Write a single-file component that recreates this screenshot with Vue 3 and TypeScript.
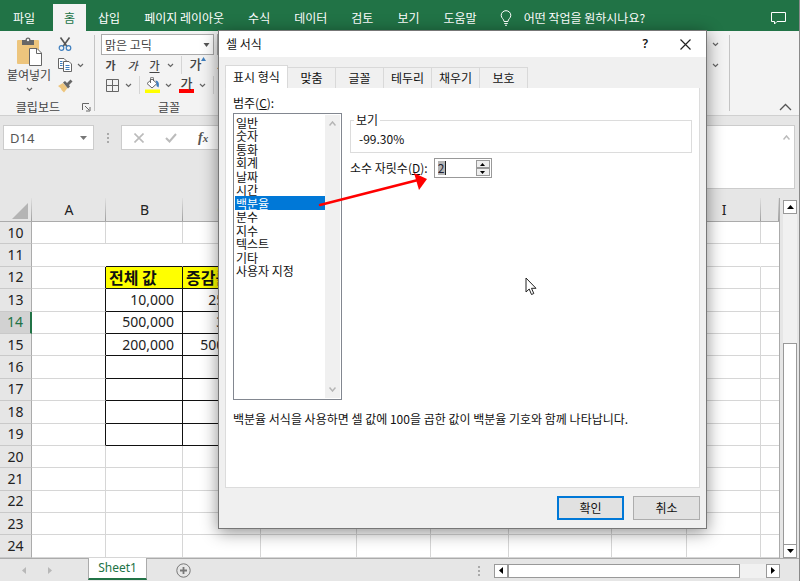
<script setup lang="ts">
import { ref } from 'vue'

interface Row {
  n: number
  b?: string
  c?: string
}

const menus: string[] = ['파일', '홈', '삽입', '페이지 레이아웃', '수식', '데이터', '검토', '보기', '도움말']
const activeMenu = ref('홈')

const columns: string[] = ['A', 'B', 'C', 'D', 'E', 'F', 'G', 'H', 'I', '']
const rows: Row[] = [
  { n: 10 },
  { n: 11 },
  { n: 12, b: '전체 값', c: '증감률' },
  { n: 13, b: '10,000', c: '25,000' },
  { n: 14, b: '500,000', c: '3,500' },
  { n: 15, b: '200,000', c: '500,000' },
  ...[16, 17, 18, 19, 20, 21, 22, 23, 24].map((n) => ({ n })),
]

function cellText(row: Row, col: string): string {
  if (col === 'B') return row.b ?? ''
  if (col === 'C') return row.c ?? ''
  return ''
}

function cellClass(row: Row, col: string): Record<string, boolean> {
  const inTable = row.n >= 12 && row.n <= 19
  const tableCol = col === 'B' || col === 'C'
  return {
    merged: row.n === 11,
    'line-right': inTable && (tableCol || col === 'A'),
    'line-bottom': tableCol && (inTable || row.n === 11),
    title: row.n === 12 && tableCol,
  }
}

const dialogTabs: string[] = ['표시 형식', '맞춤', '글꼴', '테두리', '채우기', '보호']
const activeTab = ref('표시 형식')

const categories: string[] = [
  '일반', '숫자', '통화', '회계', '날짜', '시간',
  '백분율', '분수', '지수', '텍스트', '기타', '사용자 지정',
]
const category = ref('백분율')
const decimals = ref('2')
</script>

<template>
  <div class="window">
    <nav class="menu">
      <button
        v-for="m in menus"
        :key="m"
        type="button"
        class="menu-item"
        :class="{ active: m === activeMenu, file: m === '파일' }"
        @click="activeMenu = m"
      >{{ m }}</button>
      <button type="button" class="tell-me">
        <svg width="12" height="16" viewBox="0 0 12 16" fill="none" stroke="#fff">
          <path d="M4 11.5C4 9 1.2 8.300 1.200 5.300A4.800 4.600 0 0 1 10.800 5.300C10.800 8.300 8 9 8 11.500ZM4.200 13.500H7.800M5 15.300H7" />
        </svg>
        어떤 작업을 원하시나요?
      </button>
      <button type="button" class="comment" aria-label="메모">
        <svg width="17" height="14" viewBox="0 0 17 14" fill="none" stroke="#fff">
          <path d="M1.500 1.500H15.500V10.500H7L4.500 13V10.500H1.500Z" />
        </svg>
      </button>
    </nav>

    <section class="ribbon">
      <div class="group clipboard">
        <div class="clip-tools">
          <button type="button" class="paste">
            <svg width="27" height="30" viewBox="0 0 27 30">
              <rect x="1" y="3" width="22" height="24" rx="1" fill="#edc57d" />
              <path d="M6 8V3H9.500A2.500 2.500 0 0 1 14.500 3H18V8Z" fill="#666" />
              <circle cx="12" cy="3" r="1.200" fill="#f3f3f3" />
              <path d="M13.500 11.500H21L25.500 16V28.500H13.500Z" fill="#fff" stroke="#666" />
              <path d="M20.500 11.500V16.500H25.500" fill="none" stroke="#666" />
            </svg>
            <span>붙여넣기</span>
            <svg class="chev" width="7" height="5" viewBox="0 0 7 5"><path d="M1 1L3.500 3.500L6 1" /></svg>
          </button>
          <div class="clip-side">
            <button type="button" aria-label="잘라내기">
              <svg width="14" height="14" viewBox="0 0 14 14" fill="none">
                <path d="M2.500 0.500L9 9.500M11.500 0.500L5 9.500" stroke="#555" stroke-width="1.600" />
                <circle cx="3.500" cy="11" r="2.300" stroke="#3f7fbf" stroke-width="1.200" />
                <circle cx="10.500" cy="11" r="2.300" stroke="#3f7fbf" stroke-width="1.200" />
              </svg>
            </button>
            <button type="button" aria-label="복사">
              <svg width="14" height="14" viewBox="0 0 14 14" fill="#fff" stroke="#666">
                <path d="M0.500 0.500H6L8.500 3V10.500H0.500Z" />
                <path d="M5.500 3.500H11L13.500 6V13.500H5.500Z" />
                <path d="M2 3.500H4.500M2 5.500H4.500M2 7.500H4.500M7.500 7.500H11.500M7.500 9.500H11.500M7.500 11.500H11.500" stroke="#3f7fbf" />
              </svg>
              <svg class="chev" width="7" height="5" viewBox="0 0 7 5"><path d="M1 1L3.500 3.500L6 1" /></svg>
            </button>
            <button type="button" aria-label="서식 복사">
              <svg width="15" height="14" viewBox="0 0 15 14">
                <path d="M0 7L5 4L9.500 9L6 13.500L3.500 11L3 9.500Z" fill="#edc57d" />
                <path d="M5 3.500L7 2L9 4L12.500 0.500L14.500 2.500L11 6L12 7.500L10 9.500Z" fill="#666" />
              </svg>
            </button>
          </div>
        </div>
        <div class="caption">
          <span>클립보드</span>
          <button type="button" class="launcher" aria-label="클립보드 옵션">
            <svg width="9" height="9" viewBox="0 0 9 9" fill="none" stroke="#666">
              <path d="M0.500 7V0.500H7M3 3L7 7M8 4V8H4" />
            </svg>
          </button>
        </div>
      </div>

      <div class="group font">
        <div class="font-row boxes">
          <button type="button" class="font-name">맑은 고딕
            <svg width="7" height="4" viewBox="0 0 7 4"><path d="M0.500 0H6.500L3.500 4Z" fill="#555" /></svg>
          </button>
          <button type="button" class="font-size" aria-label="글꼴 크기"></button>
        </div>
        <div class="font-row">
          <button type="button" class="ga bold">가</button>
          <button type="button" class="ga italic">가</button>
          <button type="button" class="ga under">가</button>
          <svg class="chev" width="7" height="5" viewBox="0 0 7 5"><path d="M1 1L3.500 3.500L6 1" /></svg>
          <i class="bar"></i>
          <button type="button" class="ga large">가<svg width="5" height="4" viewBox="0 0 5 4"><path d="M0 4L2.500 0L5 4Z" fill="#3f7fbf" /></svg></button>
          <button type="button" class="ga italic">가</button>
        </div>
        <div class="font-row colors">
          <button type="button" class="tool" aria-label="테두리">
            <svg width="13" height="13" viewBox="0 0 13 13" fill="none" stroke="#666">
              <path d="M0.500 0.500H12.500V12.500H0.500ZM6.500 0.500V12.500M0.500 6.500H12.500" />
            </svg>
          </button>
          <svg class="chev" width="7" height="5" viewBox="0 0 7 5"><path d="M1 1L3.500 3.500L6 1" /></svg>
          <i class="bar"></i>
          <button type="button" class="tool" aria-label="채우기 색">
            <svg width="15" height="16" viewBox="0 0 15 16">
              <path d="M2 6.500L7 2L12 6.500L7 11Z" fill="#fff" stroke="#666" />
              <path d="M5.500 6V1.500A1.500 1.500 0 0 1 8.500 1.500V4" fill="none" stroke="#666" />
              <path d="M10.500 3.500C14 4 14.500 7 13.500 10.500L11.500 9V6Z" fill="#3f7fbf" />
              <rect y="12.500" width="15" height="3.500" fill="#ff0" />
            </svg>
          </button>
          <svg class="chev" width="7" height="5" viewBox="0 0 7 5"><path d="M1 1L3.500 3.500L6 1" /></svg>
          <button type="button" class="ga color">가</button>
          <svg class="chev" width="7" height="5" viewBox="0 0 7 5"><path d="M1 1L3.500 3.500L6 1" /></svg>
          <i class="bar"></i>
        </div>
        <div class="caption">글꼴</div>
      </div>

      <div class="group more">
        <svg class="chev" width="7" height="5" viewBox="0 0 7 5"><path d="M1 1L3.500 3.500L6 1" /></svg>
        <svg class="chev" width="7" height="5" viewBox="0 0 7 5"><path d="M1 1L3.500 3.500L6 1" /></svg>
      </div>
      <button type="button" class="collapse" aria-label="리본 메뉴 축소">
        <svg width="13" height="8" viewBox="0 0 13 8" fill="none" stroke="#555" stroke-width="1.300"><path d="M1 7L6.500 1.500L12 7" /></svg>
      </button>
    </section>

    <section class="formula">
      <button type="button" class="name-box">D14
        <svg width="7" height="4" viewBox="0 0 7 4"><path d="M0 0H7L3.500 4Z" fill="#777" /></svg>
      </button>
      <svg class="dots" width="2" height="10" viewBox="0 0 2 10" fill="#aaa"><path d="M0 0H2V2H0ZM0 4H2V6H0ZM0 8H2V10H0Z" /></svg>
      <div class="fx-box">
        <svg width="10" height="10" viewBox="0 0 10 10" fill="none" stroke="#bbb" stroke-width="1.600"><path d="M0.500 0.500L9.500 9.500M9.500 0.500L0.500 9.500" /></svg>
        <svg width="12" height="10" viewBox="0 0 12 10" fill="none" stroke="#bbb" stroke-width="2"><path d="M1 5L4.500 8.500L11 1" /></svg>
        <span class="fx">f<small>x</small></span>
      </div>
      <div class="formula-text">
        <textarea aria-label="수식 입력줄"></textarea>
        <svg width="7" height="5" viewBox="0 0 7 5" fill="none" stroke="#bbb" stroke-width="1.500"><path d="M0.500 4.500L3.500 1L6.500 4.500" /></svg>
      </div>
    </section>

    <main class="sheet">
      <table class="grid">
        <colgroup>
          <col class="w-head" /><col class="w-a" /><col class="w-b" /><col class="w-c" /><col class="w-d" />
          <col class="w-a" /><col class="w-c" /><col class="w-g" /><col class="w-h" /><col class="w-a" /><col />
        </colgroup>
        <thead>
          <tr>
            <th class="corner"><svg width="16" height="16" viewBox="0 0 16 16"><path d="M16 0V16H0Z" fill="#b4b4b4" /></svg></th>
            <th v-for="(c, i) in columns" :key="i">{{ c }}</th>
          </tr>
        </thead>
        <tbody>
          <tr v-for="r in rows" :key="r.n">
            <th :class="{ current: r.n === 14 }">{{ r.n }}</th>
            <td v-for="(c, i) in columns" :key="i" :class="cellClass(r, c)">{{ cellText(r, c) }}</td>
          </tr>
        </tbody>
      </table>
      <div class="vscroll">
        <button type="button" aria-label="위로"><svg width="7" height="4" viewBox="0 0 7 4"><path d="M0 4H7L3.500 0Z" /></svg></button>
        <div class="vtrack"><div class="vthumb"></div></div>
        <button type="button" aria-label="아래로"><svg width="7" height="4" viewBox="0 0 7 4"><path d="M0 0H7L3.500 4Z" /></svg></button>
      </div>
    </main>

    <footer class="sheets">
      <div class="sheet-nav">
        <svg width="4" height="7" viewBox="0 0 4 7" fill="#b8b8b8"><path d="M4 0V7L0 3.500Z" /></svg>
        <svg width="4" height="7" viewBox="0 0 4 7" fill="#b8b8b8"><path d="M0 0V7L4 3.500Z" /></svg>
      </div>
      <button type="button" class="sheet-tab">Sheet1</button>
      <button type="button" class="add" aria-label="새 시트">
        <svg width="15" height="15" viewBox="0 0 15 15" fill="none" stroke="#777"><circle cx="7.500" cy="7.500" r="6.700" /><path d="M7.500 4V11M4 7.500H11" stroke-width="1.800" /></svg>
      </button>
      <svg class="dots" width="2" height="10" viewBox="0 0 2 10" fill="#aaa"><path d="M0 0H2V2H0ZM0 4H2V6H0ZM0 8H2V10H0Z" /></svg>
      <div class="hscroll">
        <button type="button" aria-label="왼쪽으로"><svg width="4" height="7" viewBox="0 0 4 7"><path d="M4 0V7L0 3.500Z" /></svg></button>
        <div class="htrack"><div class="hthumb"></div></div>
        <button type="button" aria-label="오른쪽으로"><svg width="4" height="7" viewBox="0 0 4 7"><path d="M0 0V7L4 3.500Z" /></svg></button>
      </div>
    </footer>

    <div class="dialog" role="dialog" aria-labelledby="dialog-title">
      <header class="dialog-head">
        <h1 id="dialog-title">셀 서식</h1>
        <button type="button" class="help">?</button>
        <button type="button" class="close" aria-label="닫기">
          <svg width="11" height="11" viewBox="0 0 11 11" fill="none" stroke="#222" stroke-width="1.200"><path d="M0.500 0.500L10.500 10.500M10.500 0.500L0.500 10.500" /></svg>
        </button>
      </header>
      <div class="dialog-body">
        <div class="tabs" role="tablist">
          <button
            v-for="t in dialogTabs"
            :key="t"
            type="button"
            role="tab"
            :aria-selected="t === activeTab"
            :class="{ active: t === activeTab }"
            @click="activeTab = t"
          >{{ t }}</button>
        </div>
        <div class="panel">
          <label class="cat-label" for="category">범주(<u>C</u>):</label>
          <div class="panel-main">
            <div class="list">
              <select id="category" v-model="category" size="12">
                <option v-for="c in categories" :key="c" :value="c">{{ c }}</option>
              </select>
              <div class="list-scroll">
                <svg width="7" height="5" viewBox="0 0 7 5"><path d="M0.500 4.500L3.500 1L6.500 4.500" /></svg>
                <svg width="7" height="5" viewBox="0 0 7 5"><path d="M0.500 0.500L3.500 4L6.500 0.500" /></svg>
              </div>
            </div>
            <div class="options">
              <fieldset>
                <legend>보기</legend>
                <output>-99.30%</output>
              </fieldset>
              <div class="decimals">
                <label for="decimals">소수 자릿수(<u>D</u>):</label>
                <div class="spinner">
                  <div class="value"><input id="decimals" v-model="decimals" type="text" /></div>
                  <div class="spin-buttons">
                    <button type="button" aria-label="늘리기"><svg width="5" height="3" viewBox="0 0 5 3"><path d="M0 3H5L2.500 0Z" /></svg></button>
                    <button type="button" aria-label="줄이기"><svg width="5" height="3" viewBox="0 0 5 3"><path d="M0 0H5L2.500 3Z" /></svg></button>
                  </div>
                </div>
              </div>
            </div>
          </div>
          <p>백분율 서식을 사용하면 셀 값에 100을 곱한 값이 백분율 기호와 함께 나타납니다.</p>
        </div>
        <div class="actions">
          <button type="button" class="primary">확인</button>
          <button type="button">취소</button>
        </div>
      </div>
    </div>

    <svg class="arrow" width="112" height="36" viewBox="0 0 112 36">
      <path d="M2 33L100 8" stroke="#f00" stroke-width="2.500" stroke-linecap="round" />
      <path d="M96 1L109 7L101 18Z" fill="#f00" />
    </svg>
    <svg class="cursor" width="12" height="19" viewBox="0 0 12 19">
      <path d="M1 1V15L4.200 12L6.500 17.500L8.800 16.500L6.500 11.300H11Z" fill="#fff" stroke="#222" />
    </svg>
  </div>
</template>

<style>
body {
  margin: 0;
}
</style>

<style scoped>
* {
  box-sizing: border-box;
}
.window {
  position: relative;
  display: flex;
  flex-direction: column;
  min-height: 100vh;
  overflow: hidden;
  border-right: 1px solid #8a8a8a;
  background: #e6e6e6;
  color: #333;
  font: 12px/16px 'Noto Sans CJK KR', sans-serif;
}
button {
  display: flex;
  align-items: center;
  justify-content: center;
  margin: 0;
  padding: 0;
  border: 0;
  background: none;
  color: inherit;
  font: inherit;
  white-space: nowrap;
}
svg {
  display: block;
  flex: none;
}
.chev path {
  fill: none;
  stroke: #666;
  stroke-width: 1.2;
}

/* Menu */
.menu {
  display: flex;
  height: 31px;
  padding-top: 4px;
  background: #217346;
  color: #fff;
}
.menu-item {
  padding: 0 12px;
}
.menu-item.file {
  width: 53px;
  justify-content: flex-start;
  padding-left: 13px;
}
.menu-item.active {
  padding: 0 11px;
  background: #f3f3f3;
  color: #217346;
}
.tell-me {
  gap: 12px;
  margin-left: 11px;
}
.comment {
  margin-left: auto;
  padding-right: 12px;
}

/* Ribbon */
.ribbon {
  display: flex;
  height: 85px;
  border-bottom: 1px solid #d0d0d0;
  background: #f3f3f3;
  color: #444;
}
.group {
  display: flex;
  flex-direction: column;
}
.clipboard {
  width: 95px;
  margin: 4px 0;
  border-right: 1px solid #c4c4c4;
}
.clip-tools {
  display: flex;
  flex: 1;
}
.paste {
  flex-direction: column;
  justify-content: flex-start;
  width: 58px;
  padding-top: 2px;
}
.paste .chev {
  margin-top: 4px;
}
.clip-side {
  display: flex;
  flex-direction: column;
  gap: 7px;
  padding-top: 2px;
}
.clip-side button {
  justify-content: flex-start;
  gap: 5px;
}
.caption {
  display: flex;
  justify-content: center;
  align-items: center;
  height: 8px;
}
.clipboard .caption {
  justify-content: flex-end;
  gap: 22px;
  padding-right: 3px;
}
.font {
  width: 150px;
  padding: 3px 0 4px 6px;
}
.font-row {
  display: flex;
  align-items: center;
  gap: 5px;
  height: 20px;
}
.font-row.boxes {
  gap: 3px;
  height: 21px;
}
.font-row.colors {
  padding-left: 4px;
}
.font-name,
.font-size {
  height: 21px;
  border: 1px solid #ababab;
  background: #fff;
}
.font-name {
  flex: none;
  justify-content: space-between;
  width: 113px;
  padding: 0 3px;
}
.font-size {
  flex: none;
  width: 36px;
}
.ga {
  flex: none;
  width: 15px;
  height: 17px;
  margin-left: 2px;
  font-size: 11px;
  font-weight: 500;
  line-height: 14px;
}
.bold {
  font-weight: 700;
}
.italic {
  font-style: italic;
}
.under {
  text-decoration: underline;
  text-underline-offset: 2px;
}
.large {
  width: 18px;
  align-items: flex-start;
  font-size: 13px;
}
.color {
  height: 16px;
  border-bottom: 4px solid #f00;
  font-size: 13px;
}
.tool {
  flex: none;
  width: 15px;
}
.bar {
  flex: none;
  width: 1px;
  height: 18px;
  margin-left: 2px;
  background: #d5d5d5;
}
.font .caption {
  margin-top: auto;
  padding-right: 8px;
}
.more {
  gap: 16px;
  align-items: flex-start;
  width: 19px;
  margin: 4px 0 4px auto;
  padding: 7px 0 0 1px;
  border-right: 1px solid #c4c4c4;
}
.collapse {
  align-items: flex-end;
  justify-content: flex-end;
  width: 69px;
  padding: 0 7px 4px 0;
}

/* Formula bar */
.formula {
  display: flex;
  align-items: flex-start;
  height: 82px;
  padding: 9px 4px 0 3px;
}
.name-box {
  justify-content: space-between;
  width: 91px;
  height: 25px;
  padding: 0 6px;
  border: 1px solid #ccc;
  background: #fff;
  color: #555;
  font-family: 'Noto Sans', sans-serif;
  font-size: 13px;
}
.formula .dots {
  margin: 8px 12px 0 13px;
}
.fx-box {
  display: flex;
  align-items: center;
  gap: 21px;
  width: 100px;
  height: 25px;
  padding-left: 12px;
  border: 1px solid #ccc;
  background: #fff;
}
.fx {
  color: #555;
  font: italic 700 14px/16px 'Liberation Serif', serif;
}
.fx small {
  font-size: 11px;
}
.formula-text {
  display: flex;
  flex: 1;
  height: 64px;
  margin-left: 8px;
  padding: 9px 4px 0 0;
  border: 1px solid #ccc;
  background: #fff;
}
.formula-text textarea {
  flex: 1;
  border: 0;
  background: none;
  resize: none;
}

/* Worksheet */
.sheet {
  display: flex;
  flex: 1;
}
.grid {
  flex: 1;
  height: 360px;
  table-layout: fixed;
  border-spacing: 0;
  border-right: 1px solid #ababab;
  color: #222;
  font: 14px/18px 'Noto Sans', 'Noto Sans CJK KR', sans-serif;
}
.w-head {
  width: 32px;
}
.w-a {
  width: 74px;
}
.w-b {
  width: 77px;
}
.w-c {
  width: 78px;
}
.w-d {
  width: 96px;
}
.w-g {
  width: 103px;
}
.w-h {
  width: 75px;
}
th,
td {
  padding: 0;
  overflow: hidden;
  font-weight: 400;
  white-space: nowrap;
}
thead th {
  height: 24px;
  border-bottom: 1px solid #ababab;
  background: linear-gradient(#e0e0e0, #9f9f9f) right / 1px 100% no-repeat #e6e6e6;
}
.corner svg {
  margin: 3px 0 0 12px;
}
tbody th {
  border-right: 1px solid #ababab;
  border-bottom: 1px solid #c9c9c9;
  background: #e6e6e6;
}
tbody th.current {
  border-right: 2px solid #217346;
  background: #d2d2d2;
  color: #217346;
}
td {
  padding-right: 8px;
  border-right: 1px solid #d6d6d6;
  border-bottom: 1px solid #d6d6d6;
  background: #fff;
  text-align: right;
}
td:last-child {
  border-right: 0;
}
.merged {
  border-right-color: #fff;
}
.line-right {
  border-right-color: #111;
}
.line-bottom {
  border-bottom-color: #111;
}
.title {
  padding: 0 0 0 3px;
  background: #ff0;
  color: #111;
  font-family: 'Noto Sans CJK KR', sans-serif;
  font-size: 16px;
  font-weight: 700;
  text-align: left;
}
.vscroll {
  display: flex;
  flex-direction: column;
  width: 19px;
  padding: 2px 2px 0 3px;
}
.vscroll button,
.hscroll button {
  flex: none;
  border: 1px solid #999;
  background: #fff;
}
.vscroll button {
  height: 14px;
}
.vtrack {
  display: flex;
  flex: 1;
  flex-direction: column;
  justify-content: flex-end;
  background: #f1f1f1;
}
.vthumb {
  height: 61%;
  border: 1px solid #999;
  border-bottom: 0;
  background: #fff;
}

/* Sheet tabs */
.sheets {
  display: flex;
  align-items: center;
  height: 24px;
  padding-right: 19px;
  border-top: 1px solid #ababab;
}
.sheet-nav {
  display: flex;
  gap: 22px;
  width: 88px;
  padding-left: 22px;
}
.sheet-tab {
  align-self: flex-start;
  width: 59px;
  height: 22px;
  margin-top: -1px;
  border: 1px solid #ababab;
  border-top: 0;
  border-bottom: 2px solid #217346;
  background: #fff;
  color: #217346;
  font-family: 'Noto Sans', sans-serif;
}
.add {
  margin-left: 29px;
}
.sheets .dots {
  margin-left: auto;
}
.hscroll {
  display: flex;
  width: 286px;
  height: 14px;
  margin-left: 14px;
}
.hscroll button {
  width: 14px;
}
.htrack {
  flex: 1;
  background: #f1f1f1;
}
.hthumb {
  width: 90%;
  height: 14px;
  border: 1px solid #999;
  background: #fff;
}

/* Format dialog */
.dialog {
  position: absolute;
  top: 30px;
  left: 218px;
  display: flex;
  flex-direction: column;
  width: 489px;
  height: 499px;
  border: 1px solid #777;
  background: #f0f0f0;
  box-shadow: 0 3px 16px rgba(0, 0, 0, 0.45);
  color: #111;
}
.dialog-head {
  display: flex;
  align-items: center;
  height: 26px;
  padding: 0 15px 0 7px;
  background: #fff;
}
.dialog-head h1 {
  flex: 1;
  margin: 0;
  font-size: 12px;
  font-weight: 400;
}
.help {
  margin-right: 32px;
  font-family: 'Noto Sans', sans-serif;
  font-weight: 600;
}
.dialog-body {
  display: flex;
  flex: 1;
  flex-direction: column;
  padding: 8px 6px;
}
.tabs {
  display: flex;
  align-items: flex-end;
}
.tabs button {
  width: 48px;
  height: 21px;
  border: 1px solid #d9d9d9;
  border-bottom: 0;
  border-left: 0;
}
.tabs .active {
  width: 63px;
  height: 23px;
  border-left: 1px solid #d9d9d9;
  background: #fff;
}
.panel {
  flex: 1;
  padding: 7px;
  border: 1px solid #dcdcdc;
  border-top: 0;
  background: #fff;
}
.cat-label {
  display: block;
  margin-bottom: 2px;
}
.panel-main {
  display: flex;
  gap: 8px;
}
.list {
  display: flex;
  width: 109px;
  height: 287px;
  padding: 1px;
  border: 1px solid #828790;
}
.list select {
  flex: 1;
  min-width: 0;
  height: 283px;
  padding: 0;
  overflow: hidden;
  border: 0;
  outline: 0;
  background: #fff;
  color: #111;
  font: inherit;
  scrollbar-width: none;
}
.list option {
  display: flex;
  align-items: center;
  height: 14px;
  min-height: 0;
  padding: 0 1px;
}
.list option:nth-child(even) {
  height: 13px;
}
.list option:checked {
  background: linear-gradient(#0078d7, #0078d7);
  color: #fff;
}
.list-scroll {
  display: flex;
  flex-direction: column;
  align-items: center;
  justify-content: space-between;
  width: 15px;
  padding: 6px 0;
  background: #f0f0f0;
}
.list-scroll path {
  fill: none;
  stroke: #b5b5b5;
  stroke-width: 1.5;
}
.options {
  flex: 1;
}
fieldset {
  height: 40px;
  margin: 0;
  padding: 4px 8px;
  border: 1px solid #dcdcdc;
}
legend {
  height: 14px;
  padding: 0 2px;
  line-height: 14px;
  margin-left: -5px;
}
.decimals {
  display: flex;
  align-items: center;
  gap: 6px;
  margin-top: 5px;
}
.spinner {
  display: flex;
  width: 58px;
  height: 20px;
  padding: 1px;
  border: 1px solid #999;
}
.value {
  display: flex;
  flex: 1;
  min-width: 0;
  align-items: center;
  padding-left: 2px;
}
.value input {
  width: 8px;
  height: 14px;
  padding: 0;
  border: 0;
  border-right: 1px solid #222;
  outline: 0;
  background: #b5b5b5;
  color: #223;
  font: inherit;
}
.spin-buttons {
  display: flex;
  flex-direction: column;
  width: 14px;
}
.spin-buttons button {
  flex: 1;
  border: 1px solid #999;
  background: #eee;
}
.panel p {
  margin: 11px 0 0;
  white-space: nowrap;
}
.actions {
  display: flex;
  justify-content: flex-end;
  gap: 9px;
  margin-top: 8px;
}
.actions button {
  width: 67px;
  height: 24px;
  border: 1px solid #adadad;
  background: #e1e1e1;
}
.actions .primary {
  border: 2px solid #0078d7;
}

/* Annotation and pointer */
.arrow {
  position: absolute;
  top: 172px;
  left: 318px;
}
.cursor {
  position: absolute;
  top: 277px;
  left: 525px;
}
</style>
